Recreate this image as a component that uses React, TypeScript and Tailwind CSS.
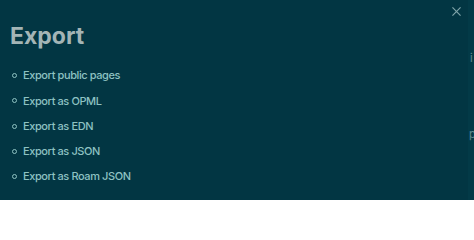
import React from "react";

const items = [
  "Export public pages",
  "Export as OPML",
  "Export as EDN",
  "Export as JSON",
  "Export as Roam JSON",
];

const ExportPanel: React.FC = () => {
  return (
    <div className="relative flex-1 bg-[#023643] px-[10px] pt-[22px]">
      <button className="absolute right-[7px] top-[7px] text-[#7fa4a9]">
        <svg width="9" height="9" viewBox="0 0 10 10" fill="none" stroke="currentColor" strokeWidth="1.3">
          <path d="M0.5 0.5L9.5 9.5M9.5 0.5L0.5 9.5" />
        </svg>
      </button>
      <h1 className="text-[23px] leading-[28px] font-bold text-[#a4b5b6]">Export</h1>
      <ul className="mt-[13px] flex flex-col">
        {items.map((item) => (
          <li key={item} className="flex h-[25.25px] items-center gap-[6px]">
            <span className="ml-[2px] h-[5px] w-[5px] rounded-full border border-[#8ec2c2]" />
            <a className="text-[11px] font-medium tracking-[-0.4px] text-[#8ec2c2]">{item}</a>
          </li>
        ))}
      </ul>
    </div>
  );
};

export default function App() {
  return (
    <div className="flex h-[200px] w-[474px] overflow-hidden bg-[#002b36]" style={{ fontFamily: "Inter, sans-serif" }}>
      <ExportPanel />
      <div className="relative w-[6px] overflow-hidden bg-[#033a47] text-[11px] text-[#5f8a90]">
        <span className="absolute left-[2px] top-[50px]">i</span>
        <span className="absolute left-[1px] top-[126px]">p</span>
      </div>
    </div>
  );
}
